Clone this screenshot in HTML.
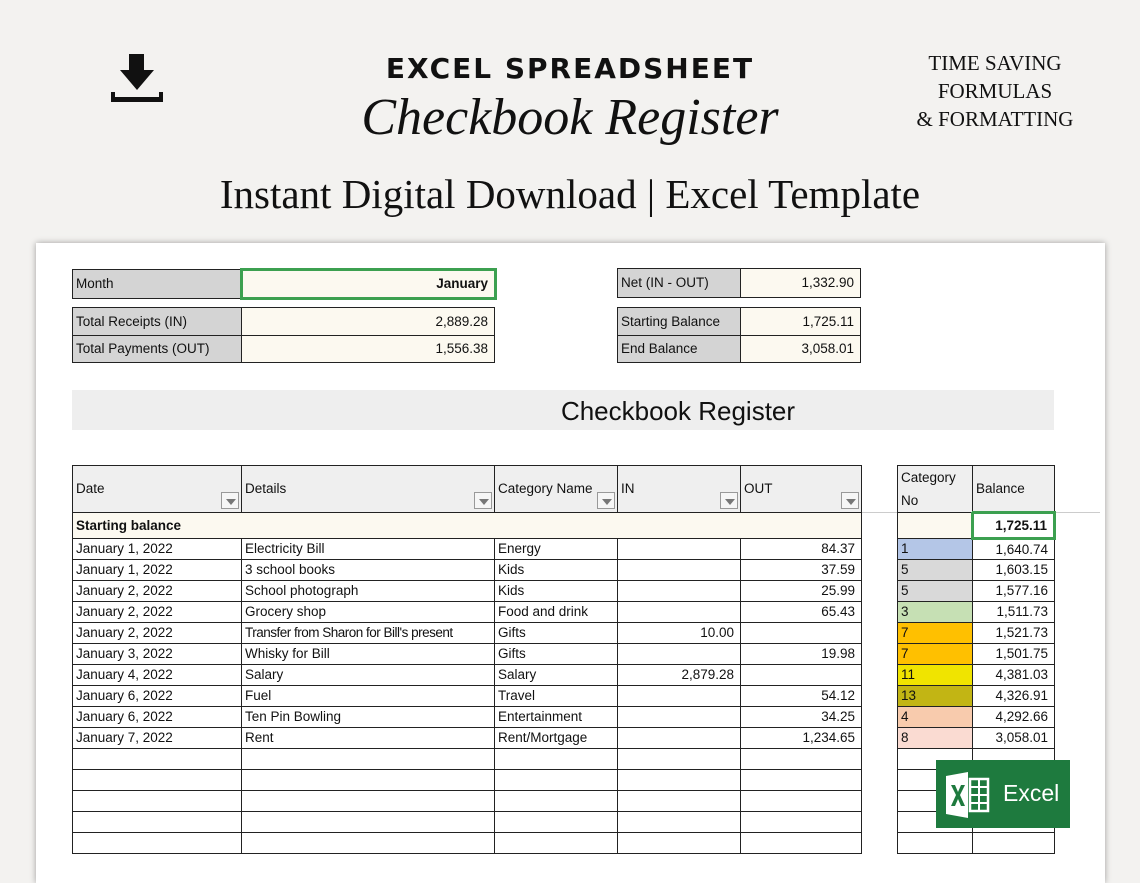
<!DOCTYPE html>
<html><head><meta charset="utf-8">
<style>
*{margin:0;padding:0;box-sizing:border-box}
body{width:1140px;height:855px;overflow:hidden;background:#f3f2f0;font-family:"Liberation Sans",sans-serif;position:relative;color:#111}
.abs{position:absolute}
.sheet{position:absolute;left:36px;top:243px;width:1069px;height:640px;background:#fff;box-shadow:0 0 6px rgba(0,0,0,.35)}
table{border-collapse:collapse;position:absolute;table-layout:fixed;font-size:13.5px}
td{border:1.5px solid #222;padding:0 3px;white-space:nowrap;overflow:hidden;height:21px;line-height:18px}
.g{background:#d4d4d4}
.c{background:#fcf9f0}
.r{text-align:right;padding-right:6px}
.h td{background:#efefef;height:47px;vertical-align:middle;position:relative}
.dd{position:absolute;right:2px;bottom:3px;width:18px;height:17px;border:1px solid #999;background:#f6f6f6}
.dd:after{content:"";position:absolute;left:4px;top:6px;border-left:5px solid transparent;border-right:5px solid transparent;border-top:6px solid #777}
</style></head><body>
<svg class="abs" style="left:108px;top:52px" width="58" height="52" viewBox="0 0 58 52"><path d="M21 2h15v16h10L29 38 12 18h9z" fill="#111"/><path d="M3 40v10h52V40h-4v5H7v-5z" fill="#111"/></svg>
<div class="abs" style="left:330px;top:52px;width:480px;text-align:center;font-size:28px;font-weight:bold;letter-spacing:2px;font-family:'DejaVu Sans',sans-serif;white-space:nowrap">EXCEL SPREADSHEET</div>
<div class="abs" style="left:300px;top:88px;width:540px;text-align:center;font-size:52px;font-family:'Liberation Serif',serif;font-style:italic;white-space:nowrap">Checkbook Register</div>
<div class="abs" style="left:100px;top:170px;width:940px;text-align:center;font-size:41px;font-family:'Liberation Serif',serif;white-space:nowrap">Instant Digital Download | Excel Template</div>
<div class="abs" style="left:895px;top:49px;width:200px;text-align:center;font-size:21px;line-height:28px;font-family:'Liberation Serif',serif">TIME SAVING<br>FORMULAS<br>&amp; FORMATTING</div>
<div class="sheet"></div>

<table style="left:72px;top:268px;width:423px"><tr><td class="g" style="width:169px;height:29px">Month</td><td class="c r" style="width:254px;height:29px;border:3px solid #3ca050;font-weight:bold">January</td></tr></table>
<table style="left:72px;top:307px;width:423px"><tr><td class="g" style="width:169px;height:28px">Total Receipts (IN)</td><td class="c r">2,889.28</td></tr><tr><td class="g" style="height:27px">Total Payments (OUT)</td><td class="c r">1,556.38</td></tr></table>
<table style="left:617px;top:268px;width:244px"><tr><td class="g" style="width:123px;height:29px">Net (IN - OUT)</td><td class="c r">1,332.90</td></tr></table>
<table style="left:617px;top:307px;width:244px"><tr><td class="g" style="width:123px;height:28px">Starting Balance</td><td class="c r">1,725.11</td></tr><tr><td class="g" style="height:27px">End Balance</td><td class="c r">3,058.01</td></tr></table>

<div class="abs" style="left:72px;top:390px;width:982px;height:40px;background:#eeeeee;text-align:center;font-size:26px;line-height:42px;padding-left:230px">Checkbook Register</div>
<div class="abs" style="left:860px;top:512px;width:240px;height:1px;background:#ccc"></div>

<table style="left:72px;top:465px;width:789px">
<tr class="h"><td style="width:169px">Date<span class="dd"></span></td><td style="width:253px">Details<span class="dd"></span></td><td style="width:123px">Category Name<span class="dd"></span></td><td style="width:123px">IN<span class="dd"></span></td><td style="width:121px">OUT<span class="dd"></span></td></tr>
<tr><td colspan="5" class="c" style="height:26px;font-weight:bold">Starting balance</td></tr>
<tr><td>January 1, 2022</td><td>Electricity Bill</td><td>Energy</td><td></td><td class="r">84.37</td></tr>
<tr><td>January 1, 2022</td><td>3 school books</td><td>Kids</td><td></td><td class="r">37.59</td></tr>
<tr><td>January 2, 2022</td><td>School photograph</td><td>Kids</td><td></td><td class="r">25.99</td></tr>
<tr><td>January 2, 2022</td><td>Grocery shop</td><td>Food and drink</td><td></td><td class="r">65.43</td></tr>
<tr><td>January 2, 2022</td><td style="font-size:13.5px;letter-spacing:-.5px">Transfer from Sharon for Bill's present</td><td>Gifts</td><td class="r">10.00</td><td></td></tr>
<tr><td>January 3, 2022</td><td>Whisky for Bill</td><td>Gifts</td><td></td><td class="r">19.98</td></tr>
<tr><td>January 4, 2022</td><td>Salary</td><td>Salary</td><td class="r">2,879.28</td><td></td></tr>
<tr><td>January 6, 2022</td><td>Fuel</td><td>Travel</td><td></td><td class="r">54.12</td></tr>
<tr><td>January 6, 2022</td><td>Ten Pin Bowling</td><td>Entertainment</td><td></td><td class="r">34.25</td></tr>
<tr><td>January 7, 2022</td><td>Rent</td><td>Rent/Mortgage</td><td></td><td class="r">1,234.65</td></tr>
<tr><td></td><td></td><td></td><td></td><td></td></tr>
<tr><td></td><td></td><td></td><td></td><td></td></tr>
<tr><td></td><td></td><td></td><td></td><td></td></tr>
<tr><td></td><td></td><td></td><td></td><td></td></tr>
<tr><td></td><td></td><td></td><td></td><td></td></tr>
</table>

<table style="left:897px;top:465px;width:157px">
<tr class="h"><td style="width:75px;line-height:23px">Category<br>No</td><td style="width:82px">Balance</td></tr>
<tr><td class="c" style="height:26px"></td><td class="r" style="border:3px solid #3ca050;font-weight:bold">1,725.11</td></tr>
<tr><td style="background:#b4c6e7">1</td><td class="r">1,640.74</td></tr>
<tr><td style="background:#d9d9d9">5</td><td class="r">1,603.15</td></tr>
<tr><td style="background:#d9d9d9">5</td><td class="r">1,577.16</td></tr>
<tr><td style="background:#c6e0b4">3</td><td class="r">1,511.73</td></tr>
<tr><td style="background:#ffc000">7</td><td class="r">1,521.73</td></tr>
<tr><td style="background:#ffc000">7</td><td class="r">1,501.75</td></tr>
<tr><td style="background:#f0e400">11</td><td class="r">4,381.03</td></tr>
<tr><td style="background:#c2b514">13</td><td class="r">4,326.91</td></tr>
<tr><td style="background:#f8cbad">4</td><td class="r">4,292.66</td></tr>
<tr><td style="background:#fadbd2">8</td><td class="r">3,058.01</td></tr>
<tr><td></td><td></td></tr><tr><td></td><td></td></tr><tr><td></td><td></td></tr><tr><td></td><td></td></tr><tr><td></td><td></td></tr>
</table>

<div class="abs" style="left:936px;top:760px;width:134px;height:68px;background:#1e7a3e">
<svg class="abs" style="left:8px;top:10px" width="50" height="50" viewBox="0 0 50 50"><path d="M2 6l22-4v46L2 44z" fill="#fff"/><path d="M7 15h4l3 7 3-7h4l-5 10 5 11h-4l-3-7-3 7H7l5-11z" fill="#1e7a3e"/><rect x="26" y="9" width="18" height="32" fill="none" stroke="#fff" stroke-width="2.5"/><path d="M26 17h18M26 25h18M26 33h18M35 9v32" stroke="#fff" stroke-width="2"/></svg>
<div class="abs" style="left:67px;top:20px;color:#fff;font-size:23px">Excel</div>
</div>
</body></html>
